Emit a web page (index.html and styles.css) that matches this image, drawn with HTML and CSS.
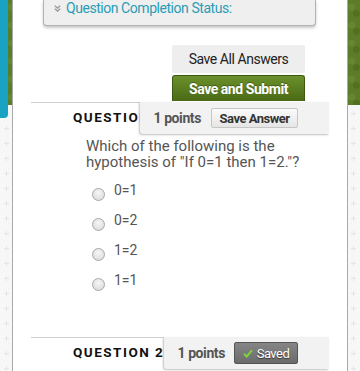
FILE: index.html
```html
<!DOCTYPE html>
<html lang="en">
<head>
<meta charset="utf-8">
<title>Test</title>
<link rel="stylesheet" href="styles.css">
</head>
<body>
<div class="page">
  <div class="side side-left">
    <div class="teal"></div>
    <div class="green green-left"></div>
  </div>
  <main class="main">
    <div class="status">
      <svg class="chev" width="7" height="7" viewBox="0 0 7 7"><path d="M0.8 0.8 L3.5 3 L6.2 0.8 M0.8 3.8 L3.5 6 L6.2 3.8" fill="none" stroke="#9a9a9a" stroke-width="1.4"/></svg>
      <span class="status-text">Question Completion Status:</span>
    </div>
    <div class="actions">
      <button class="btn btn-all">Save All Answers</button>
      <button class="btn btn-submit">Save and Submit</button>
    </div>
    <section class="question">
      <div class="q-head">
        <h3 class="q-title">QUESTION 1</h3>
        <div class="points-bar">
          <span class="pts">1 points</span>
          <button class="btn btn-save">Save Answer</button>
        </div>
      </div>
      <div class="q-body">
        <p class="q-text">Which of the following is the hypothesis of "If 0=1 then 1=2."?</p>
        <ul class="opts">
          <li class="opt"><span class="radio"></span><span class="opt-label">0=1</span></li>
          <li class="opt"><span class="radio"></span><span class="opt-label">0=2</span></li>
          <li class="opt"><span class="radio"></span><span class="opt-label">1=2</span></li>
          <li class="opt"><span class="radio"></span><span class="opt-label">1=1</span></li>
        </ul>
      </div>
    </section>
    <section class="question">
      <div class="q-head">
        <h3 class="q-title">QUESTION 2</h3>
        <div class="points-bar points-bar-2">
          <span class="pts">1 points</span>
          <button class="btn btn-saved"><svg class="check" width="10" height="9" viewBox="0 0 10 9"><path d="M1 4.8 L3.8 7.5 L9 1.2" fill="none" stroke="#7dd33a" stroke-width="2"/></svg>Saved</button>
        </div>
      </div>
    </section>
  </main>
  <div class="side side-right">
    <div class="green green-right"></div>
  </div>
</div>
</body>
</html>
```
FILE: styles.css
```css
html, body {
  margin: 0;
  padding: 0;
}
body {
  font-family: Roboto, "Liberation Sans", sans-serif;
  background: #f6f6f6;
  overflow: hidden;
}
.page {
  display: grid;
  grid-template-columns: 12px 336px 12px;
  height: 371px;
  overflow: hidden;
}
.side {
  display: flex;
  align-items: flex-start;
  background-color: #f7f7f7;
  background-image:
    linear-gradient(to bottom, transparent 7px, #e6e6e6 7px, #e6e6e6 8px, transparent 8px),
    linear-gradient(to bottom, transparent 5px, #e6e6e6 5px, #e6e6e6 10px, transparent 10px);
  background-size: 5px 15px, 1px 15px;
  background-repeat: repeat-y;
  background-position: 4px 1px, 6px 1px;
}
.side-right {
  background-position: 3px 1px, 5px 1px;
}
.teal {
  width: 8px;
  height: 118px;
  background: #19a3c2;
  border-bottom-right-radius: 4px;
  flex: none;
}
.green {
  height: 105px;
  background-color: #5d7c2a;
  background-image: radial-gradient(circle at 30% 40%, #66872f 0 3px, transparent 4px),
    radial-gradient(circle at 70% 75%, #52711f 0 3px, transparent 4px);
  background-size: 12px 18px;
}
.green-left { width: 4px; flex: none; }
.green-right { width: 12px; flex: none; }

.main {
  background: #fff;
  border-left: 1px solid #a9a9a9;
  border-right: 1px solid #a9a9a9;
  display: flex;
  flex-direction: column;
}
.status {
  margin-left: 30px;
  width: 273px;
  height: 26px;
  box-sizing: border-box;
  background: #efefef;
  border: 1px solid #b3b3b3;
  border-top: none;
  border-radius: 0 0 4px 4px;
  box-shadow: 0 2px 3px rgba(0,0,0,0.22);
  display: flex;
  align-items: flex-start;
  padding-left: 10px;
  padding-top: 0;
  flex: none;
}
.chev {
  margin-top: 5px;
  margin-right: 5px;
  flex: none;
}
.status-text {
  font-size: 14px;
  letter-spacing: -0.45px;
  line-height: 17px;
  color: #2a9db5;
}
.actions {
  margin-top: 19px;
  padding-right: 42px;
  display: flex;
  flex-direction: column;
  align-items: flex-end;
  gap: 2px;
  flex: none;
}
.btn {
  font-family: Roboto, "Liberation Sans", sans-serif;
  cursor: pointer;
  margin: 0;
}
.btn-all {
  width: 133px;
  height: 28px;
  background: #eeeeee;
  border: none;
  border-radius: 2px;
  font-size: 14px;
  letter-spacing: -0.45px;
  color: #222;
  padding: 0;
}
.btn-submit {
  width: 133px;
  height: 26px;
  background: linear-gradient(#6c902c, #4a6a16);
  border: 1px solid #3e5912;
  border-bottom: none;
  border-radius: 3px 3px 0 0;
  color: #fff;
  font-weight: bold;
  font-size: 14px;
  letter-spacing: -0.45px;
  padding: 0;
  text-shadow: 0 -1px 0 rgba(0,0,0,0.3);
}
.question {
  margin: 1px 18px 0;
  border-top: 1px solid #cfcfcf;
  flex: none;
}
.q-head {
  position: relative;
  height: 32px;
}
.q-title {
  margin: 0;
  padding-left: 42px;
  font-size: 13.5px;
  font-weight: bold;
  letter-spacing: 1.5px;
  line-height: 28px;
  color: #111;
  white-space: nowrap;
}
.points-bar {
  position: absolute;
  right: 0;
  top: -1px;
  height: 32px;
  box-sizing: border-box;
  display: flex;
  align-items: center;
  gap: 10px;
  padding: 0 31px 0 13px;
  background: #f2f2f2;
  box-shadow: -1px 1px 2px rgba(0,0,0,0.25);
  border-bottom-left-radius: 3px;
}
.points-bar-2 {
  gap: 9px;
}
.pts {
  font-size: 14px;
  letter-spacing: -0.4px;
  font-weight: bold;
  color: #555;
}
.btn-save {
  width: 87px;
  height: 20px;
  padding: 0;
  border: 1px solid #c6c6c6;
  border-radius: 2px;
  background: linear-gradient(#fbfbfb, #e5e5e5);
  font-size: 13px;
  letter-spacing: -0.5px;
  font-weight: bold;
  color: #333;
}
.btn-saved {
  height: 22px;
  width: 64px;
  padding: 0;
  border: 1px solid #555;
  border-radius: 2px;
  background: linear-gradient(#858585, #6c6c6c);
  color: #fff;
  font-size: 13px;
  letter-spacing: -0.5px;
  text-shadow: 0 1px 1px #333;
  display: flex;
  align-items: center;
  justify-content: center;
  gap: 4px;
}
.check { flex: none; }
.q-body {
  padding: 3px 0 34px 55px;
}
.q-text {
  margin: 0;
  max-width: 215px;
  font-size: 15px;
  line-height: 16px;
  color: #555;
}
.opts {
  list-style: none;
  margin: 12px 0 0;
  padding: 0 0 0 6px;
}
.opt {
  display: flex;
  align-items: flex-start;
  height: 30px;
  gap: 9px;
  font-size: 14px;
  line-height: 16px;
  color: #555;
}
.radio {
  width: 13px;
  height: 13px;
  box-sizing: border-box;
  margin-top: 6px;
  border-radius: 50%;
  border: 1px solid #a8a8a8;
  background: radial-gradient(circle at 50% 35%, #f6f6f6, #d6d6d6);
  flex: none;
}
```
